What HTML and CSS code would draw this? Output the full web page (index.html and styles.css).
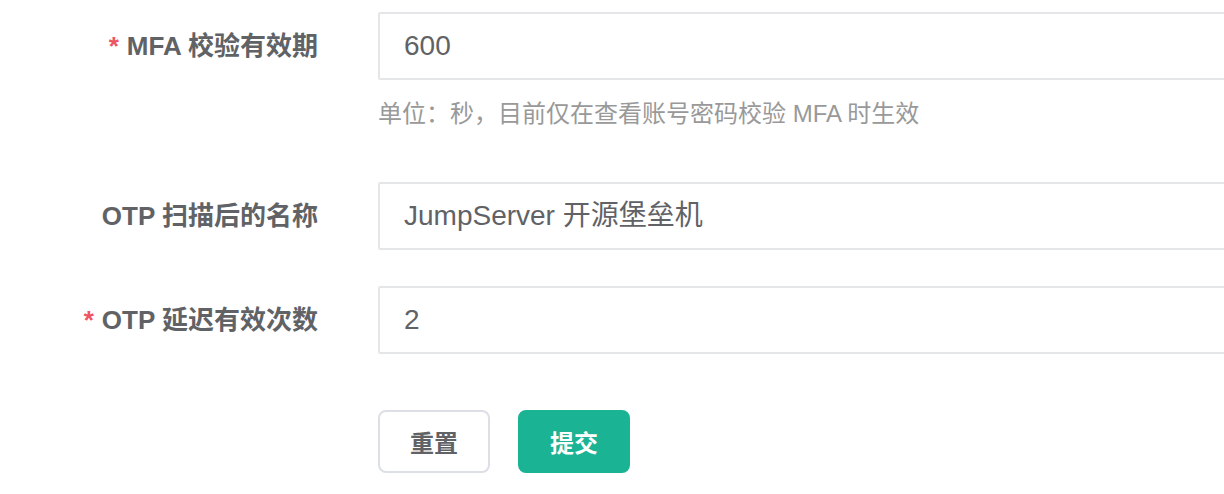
FILE: index.html
```html
<!DOCTYPE html>
<html lang="zh-CN">
<head>
<meta charset="utf-8">
<title>MFA 设置</title>
<link rel="stylesheet" href="styles.css">
</head>
<body>
<form class="form">
  <div class="row row-help">
    <label class="label required">MFA 校验有效期</label>
    <div class="field">
      <div class="input">600</div>
      <div class="help">单位：秒，目前仅在查看账号密码校验 MFA 时生效</div>
    </div>
  </div>
  <div class="row row-mid">
    <label class="label">OTP 扫描后的名称</label>
    <div class="field">
      <div class="input">JumpServer 开源堡垒机</div>
    </div>
  </div>
  <div class="row row-last">
    <label class="label required">OTP 延迟有效次数</label>
    <div class="field">
      <div class="input">2</div>
    </div>
  </div>
  <div class="row">
    <div class="label"></div>
    <div class="actions">
      <button type="button" class="btn btn-default">重置</button>
      <button type="button" class="btn btn-primary">提交</button>
    </div>
  </div>
</form>
</body>
</html>
```
FILE: styles.css
```css
html, body {
  margin: 0;
  padding: 0;
  background: #ffffff;
  overflow: hidden;
}
body {
  font-family: "Liberation Sans", "Noto Sans CJK SC", sans-serif;
  color: #606266;
}
.form {
  padding-top: 12px;
  width: 1400px;
}
.row {
  display: grid;
  grid-template-columns: 318px 900px;
  column-gap: 60px;
  align-items: start;
}
.row-help { margin-bottom: 50px; }
.row-mid { margin-bottom: 36px; }
.row-last { margin-bottom: 56px; }
.label {
  text-align: right;
  font-size: 26px;
  font-weight: bold;
  line-height: 68px;
  color: #606266;
  white-space: nowrap;
}
.required::before {
  content: "*";
  color: #ed5565;
  margin-right: 8px;
}
.input {
  box-sizing: border-box;
  height: 68px;
  border: 2px solid #e5e6e7;
  border-radius: 2px;
  padding: 0 24px;
  font-size: 28px;
  line-height: 64px;
  color: #606266;
  white-space: nowrap;
}
.help {
  margin-top: 16px;
  font-size: 24px;
  line-height: 36px;
  color: #999999;
}
.actions {
  display: flex;
  gap: 28px;
}
.btn {
  box-sizing: border-box;
  height: 63px;
  padding: 0 30px;
  border-radius: 8px;
  font-family: "Liberation Sans", "Noto Sans CJK SC", sans-serif;
  font-size: 24px;
  font-weight: bold;
  cursor: pointer;
}
.btn-default {
  background: #ffffff;
  border: 2px solid #dcdfe6;
  color: #606266;
}
.btn-primary {
  background: #1ab394;
  border: 2px solid #1ab394;
  color: #ffffff;
}
```
